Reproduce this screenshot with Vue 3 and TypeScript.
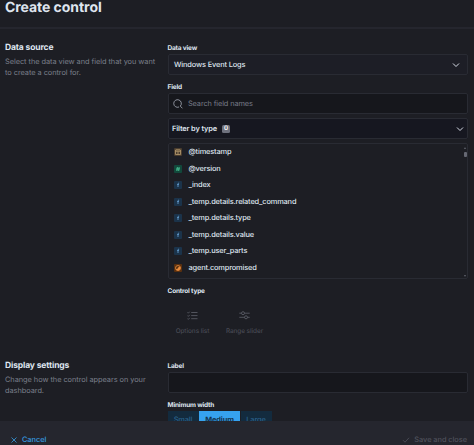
<script setup lang="ts">
import { ref } from 'vue'

interface Field {
  name: string
  type: 'date' | 'number' | 'text' | 'boolean'
}

const fields: Field[] = [
  { name: '@timestamp', type: 'date' },
  { name: '@version', type: 'number' },
  { name: '_index', type: 'text' },
  { name: '_temp.details.related_command', type: 'text' },
  { name: '_temp.details.type', type: 'text' },
  { name: '_temp.details.value', type: 'text' },
  { name: '_temp.user_parts', type: 'text' },
  { name: 'agent.compromised', type: 'boolean' }
]

const widths = ['Small', 'Medium', 'Large']
const selectedWidth = ref('Medium')
const label = ref('')
</script>

<template>
  <div class="flyout">
    <header class="flyout-header">
      <h2>Create control</h2>
    </header>

    <main class="flyout-body">
      <section class="group data-source">
        <div class="about">
          <h3>Data source</h3>
          <p>Select the data view and field that you want<br />to create a control for.</p>
        </div>
        <div class="form">
          <div class="form-label">Data view</div>
          <div class="box select">
            <span>Windows Event Logs</span>
            <svg class="chevron" viewBox="0 0 8 8"><path d="M1 2.5 4 5.5 7 2.5" /></svg>
          </div>

          <div class="form-label field-label">Field</div>
          <div class="box search">
            <svg class="magnifier" viewBox="0 0 10 10"><path d="M6 8A3.8 3.8 0 1 1 7.3 7.1L9.4 9.3" /></svg>
            <span>Search field names</span>
          </div>
          <div class="box filter">
            <span>Filter by type</span>
            <span class="badge">0</span>
            <svg class="chevron" viewBox="0 0 8 8"><path d="M1 2.5 4 5.5 7 2.5" /></svg>
          </div>

          <div class="field-list">
            <ul>
              <li v-for="field in fields" :key="field.name">
                <span :class="['token', field.type]">
                  <svg v-if="field.type === 'date'" viewBox="0 0 8 8"><path d="M1.5 2h5v4.5h-5zM1.5 3.3h5M3 1.2v1M5 1.2v1M4 3.5v3" /></svg>
                  <svg v-else-if="field.type === 'number'" viewBox="0 0 8 8"><path d="M3.5 2 2.8 6M5.2 2 4.5 6M2.3 3.3h3.6M2.1 4.8h3.6" /></svg>
                  <svg v-else-if="field.type === 'text'" viewBox="0 0 8 8"><path d="M5.1 2.2H4.6Q4 2.2 4 3V6M3.2 3.5h1.7" /></svg>
                  <svg v-else viewBox="0 0 8 8"><circle cx="4" cy="4" r="2.5" /><path class="half" d="M6.5 4A2.5 2.5 0 0 1 1.8 5.2Q4 5.2 4.2 3.5 5 2.5 6.2 2.7Z" /></svg>
                </span>
                <span>{{ field.name }}</span>
              </li>
            </ul>
            <div class="scrollbar">
              <i class="arrow up"></i>
              <i class="thumb"></i>
              <i class="arrow down"></i>
            </div>
          </div>

          <div class="form-label control-label">Control type</div>
          <div class="control-types">
            <div class="control-type">
              <svg viewBox="0 0 11 9"><path d="M.5 1.4 1.3 2.2 2.7.7M.5 4.6 1.3 5.4 2.7 3.9M.5 7.6 1.3 8.4 2.7 6.9M4.2 1.5H10.5M4.2 4.6H10.5M4.2 7.7H10.5" /></svg>
              <span>Options list</span>
            </div>
            <div class="control-type slider">
              <svg viewBox="0 0 11 9"><path d="M.3 2.2H2.5M5.5 2.2H10.7M.3 6.3H5.5M8.5 6.3H10.7" /><circle cx="4" cy="2.2" r="1.5" /><circle cx="7" cy="6.3" r="1.5" /></svg>
              <span>Range slider</span>
            </div>
          </div>
        </div>
      </section>

      <section class="group display-settings">
        <div class="about">
          <h3>Display settings</h3>
          <p>Change how the control appears on your<br />dashboard.</p>
        </div>
        <div class="form">
          <div class="form-label">Label</div>
          <input v-model="label" class="box" type="text" aria-label="Label" />
          <div class="form-label width-label">Minimum width</div>
          <div class="button-group">
            <button
              v-for="width in widths"
              :key="width"
              :class="{ selected: width === selectedWidth }"
              @click="selectedWidth = width"
            >{{ width }}</button>
          </div>
        </div>
      </section>
    </main>

    <footer class="flyout-footer">
      <button class="cancel">
        <svg viewBox="0 0 8 8"><path d="M1.5 1.5l5 5M6.5 1.5l-5 5" /></svg>
        <span>Cancel</span>
      </button>
      <button class="save" disabled>
        <svg viewBox="0 0 8 8"><path d="M1 4.2 3 6.2 7 1.8" /></svg>
        <span>Save and close</span>
      </button>
    </footer>
  </div>
</template>

<style>
body {
  background: #1d1e24;
}
</style>

<style scoped>
.flyout {
  display: flex;
  flex-direction: column;
  height: 445px;
  overflow: hidden;
  background: #1d1e24;
  color: #dfe5ef;
  font-family: Inter, sans-serif;
  font-size: 7.4px;
  line-height: 10px;
  letter-spacing: -0.13px;
  text-rendering: geometricPrecision;
}

* {
  box-sizing: border-box;
}

svg {
  display: block;
  flex: none;
  fill: none;
  stroke: currentColor;
  stroke-width: 0.8;
}

button {
  border: 0;
  padding: 0;
  background: none;
  color: inherit;
  font: inherit;
  letter-spacing: inherit;
  text-rendering: inherit;
}

.flyout-header {
  flex: none;
  height: 29px;
  padding-left: 5px;
  border-bottom: 2px solid #25262e;
}

h2 {
  margin: -2px 0 0;
  font-size: 14px;
  line-height: 19px;
  font-weight: 700;
  letter-spacing: -0.05px;
}

.flyout-body {
  flex: 1;
  min-height: 0;
  overflow: hidden;
}

.group {
  display: flex;
  padding: 0 6px 0 5px;
}

.data-source {
  height: 318px;
  padding-top: 13px;
}

.display-settings {
  padding-top: 13px;
}

.about {
  width: 162.5px;
  flex: none;
}

h3 {
  margin: 0;
  font-size: 8.5px;
  line-height: 13px;
  font-weight: 700;
}

.about p {
  margin: 2px 0 0;
  color: #7a7e8a;
  font-size: 7.4px;
  line-height: 10.5px;
  letter-spacing: -0.05px;
  white-space: nowrap;
}

.form {
  flex: 1;
  min-width: 0;
}

.form-label {
  height: 12px;
  line-height: 12px;
  font-size: 6.5px;
  font-weight: 700;
  letter-spacing: -0.18px;
}

.box {
  display: flex;
  align-items: center;
  width: 300px;
  height: 21px;
  padding: 0 7px 0 5.5px;
  border: 1px solid #292b33;
  border-radius: 2px;
  background: #16171c;
}

.select {
  background: #1d1e26;
  font-weight: 500;
}

.chevron {
  width: 8px;
  height: 8px;
  margin-left: auto;
  stroke-width: 0.95;
}

.field-label {
  margin-top: 6px;
}

.search {
  padding-left: 4.5px;
  color: #777b87;
}

.magnifier {
  width: 10px;
  height: 10px;
  margin-right: 5px;
  color: #a9aebb;
}

.filter {
  margin-top: 4px;
  padding: 0 4px 0 3.5px;
  background: #161720;
  font-weight: 600;
}

.filter .chevron {
  margin-right: -1px;
}

.badge {
  width: 8px;
  height: 8px;
  margin-left: 5px;
  border-radius: 1.5px;
  background: #6e717d;
  color: #fff;
  font-size: 6.2px;
  line-height: 8px;
  letter-spacing: 0;
  text-align: center;
}

.field-list {
  display: flex;
  justify-content: space-between;
  width: 300px;
  height: 136px;
  margin-top: 4px;
  border: 1px solid #292b33;
  border-radius: 2px;
}

ul {
  margin: 0;
  padding: 0 0 0 5.5px;
  list-style: none;
}

li {
  display: flex;
  align-items: center;
  height: 16.5px;
  font-weight: 500;
  letter-spacing: -0.15px;
}

.token {
  width: 8px;
  height: 8px;
  margin-right: 6.5px;
  border-radius: 1px;
}

.token svg {
  width: 8px;
  height: 8px;
}

.date {
  background: #4a3d2e;
  color: #b99d70;
}

.number {
  background: #12483b;
  color: #48bd91;
}

.text {
  background: #1b334a;
  color: #6ba5d8;
}

.boolean {
  background: #5a300f;
  color: #e78b3e;
}

.half {
  fill: currentColor;
  stroke: none;
}

.scrollbar {
  display: flex;
  flex-direction: column;
  align-items: center;
  width: 3px;
  padding: 3px 0 1px;
}

.arrow {
  border: 1.5px solid transparent;
}

.up {
  border-top: 0;
  border-bottom: 2px solid #62646e;
}

.thumb {
  width: 3px;
  height: 5px;
  margin-top: 3px;
  border-radius: 1px;
  background: #666873;
}

.down {
  margin-top: auto;
  border-bottom: 0;
  border-top: 2px solid #62646e;
}

.control-label {
  margin-top: 6px;
}

.control-types {
  display: flex;
  padding-top: 14px;
  color: #494b55;
}

.control-type {
  display: flex;
  flex-direction: column;
  align-items: center;
  width: 50px;
  font-size: 6.4px;
  font-weight: 500;
  letter-spacing: -0.05px;
  white-space: nowrap;
}

.control-type svg {
  width: 11px;
  height: 9px;
  margin-bottom: 6px;
  color: #60626c;
}

.slider {
  margin-left: 2px;
}

.width-label {
  margin-top: 6px;
}

.button-group {
  display: flex;
  gap: 0.5px;
}

.button-group button {
  width: 31px;
  height: 18px;
  background: #132b3e;
  color: #2a628c;
  font-weight: 500;
}

.button-group .selected {
  width: 41px;
  background: #36a2ef;
  color: #12324d;
  font-weight: 700;
}

.flyout-footer {
  display: flex;
  justify-content: space-between;
  flex: none;
  height: 24px;
  padding: 9px 7px 0 10px;
  background: #25262e;
}

.flyout-footer button {
  display: flex;
  align-items: center;
  height: 20px;
  font-weight: 500;
  letter-spacing: -0.05px;
}

.flyout-footer svg {
  width: 8px;
  height: 8px;
  margin-right: 4px;
}

.cancel {
  color: #369ee5;
}

.save {
  color: #50525d;
}
</style>
